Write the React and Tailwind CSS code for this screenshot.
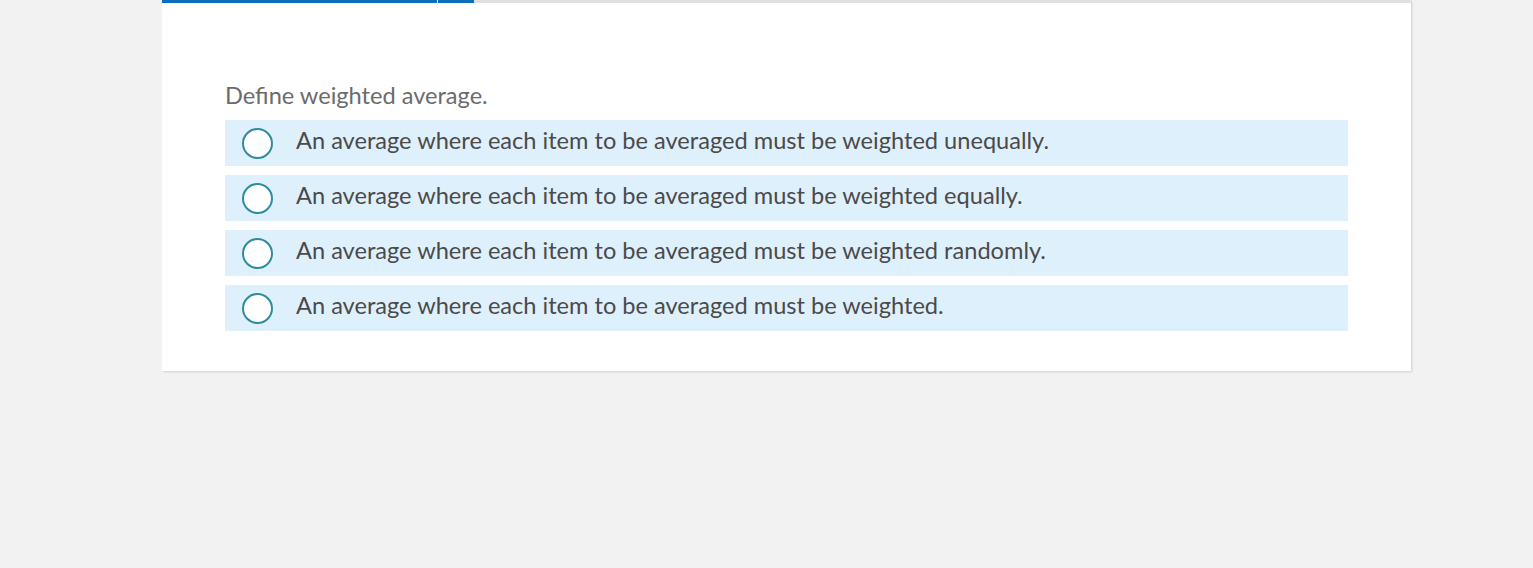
import React from "react";

const options = [
  "An average where each item to be averaged must be weighted unequally.",
  "An average where each item to be averaged must be weighted equally.",
  "An average where each item to be averaged must be weighted randomly.",
  "An average where each item to be averaged must be weighted.",
];

export default function App() {
  return (
    <div className="min-h-[568px] w-full bg-[#f2f2f2] pl-[162px] pr-[122px]" style={{ fontFamily: "Lato, 'Open Sans', sans-serif" }}>
      <div className="w-[1249px] bg-white shadow-[1px_1px_2px_rgba(0,0,0,0.15)]">
        <div className="flex h-[3px]">
          <div className="h-full w-[275px] bg-[#0a6ebd]" />
          <div className="h-full w-px bg-white" />
          <div className="h-full w-[36px] bg-[#0a6ebd]" />
          <div className="h-full flex-1 bg-[#e0e0e0]" />
        </div>
        <div className="pl-[63px] pr-[63px] pt-[77px] pb-[40px]">
          <div className="text-[23.6px] leading-[30px] text-[#6b6b6b]">Define weighted average.</div>
          <div className="mt-[10px] flex flex-col gap-[9px]">
            {options.map((o) => (
              <div key={o} className="flex h-[46px] items-center bg-[#dff0fd] pl-[17px]">
                <div className="h-[31px] w-[31px] shrink-0 rounded-full border-2 border-[#2e8c9e] bg-white" />
                <div className="ml-[23px] -mt-[7px] text-[23.6px] leading-[30px] text-[#4a4a4a]">{o}</div>
              </div>
            ))}
          </div>
        </div>
      </div>
    </div>
  );
}
